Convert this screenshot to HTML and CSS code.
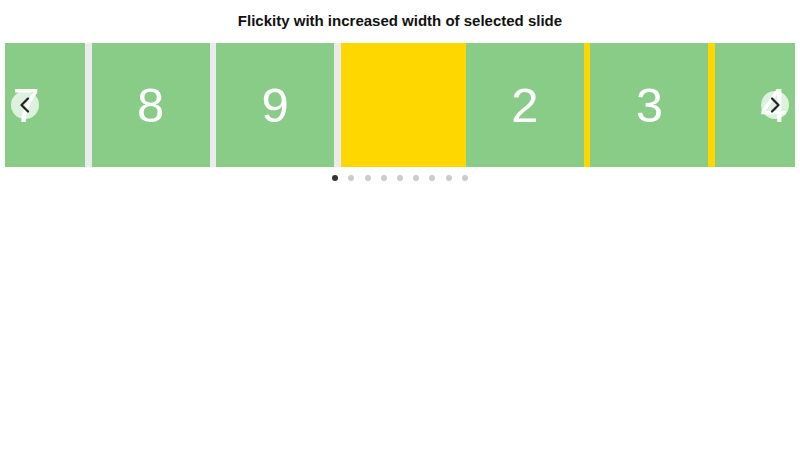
FILE: index.html
```html
<!DOCTYPE html>
<html>
<head>
<meta charset="utf-8">
<link rel="stylesheet" href="styles.css">
</head>
<body>
<h1 class="title">Flickity with increased width of selected slide</h1>
<div class="carousel">
  <div class="viewport">
    <div class="track">
      <div class="cell">7</div>
      <div class="cell">8</div>
      <div class="cell">9</div>
      <div class="selected-group">
        <div class="cell selected"></div>
        <div class="cell">2</div>
        <div class="cell">3</div>
        <div class="cell">4</div>
      </div>
    </div>
  </div>
  <button class="nav prev" aria-label="Previous">
    <svg viewBox="0 0 16 16" width="16" height="16"><polyline points="11,1.5 4.5,8 11,14.5" fill="none" stroke="#222" stroke-width="2.2" stroke-linecap="round" stroke-linejoin="round"/></svg>
  </button>
  <button class="nav next" aria-label="Next">
    <svg viewBox="0 0 16 16" width="16" height="16"><polyline points="5,1.5 11.5,8 5,14.5" fill="none" stroke="#222" stroke-width="2.2" stroke-linecap="round" stroke-linejoin="round"/></svg>
  </button>
  <ol class="dots">
    <li class="dot active"></li>
    <li class="dot"></li>
    <li class="dot"></li>
    <li class="dot"></li>
    <li class="dot"></li>
    <li class="dot"></li>
    <li class="dot"></li>
    <li class="dot"></li>
    <li class="dot"></li>
  </ol>
</div>
</body>
</html>
```

FILE: styles.css
```css
html, body {
  margin: 0;
  padding: 0;
  background: #fff;
}
body {
  font-family: "Liberation Sans", Arial, sans-serif;
  color: #111;
}
.title {
  margin: 0;
  padding-top: 11px;
  height: 20px;
  line-height: 20px;
  font-size: 15px;
  font-weight: bold;
  text-align: center;
}
.carousel {
  position: relative;
  margin: 11.7px 5px 0 5px;
}
.viewport {
  overflow: hidden;
  height: 124px;
  background: #ebebeb;
}
.track {
  display: flex;
  gap: 6.4px;
  height: 100%;
  margin-left: -38px;
}
.cell {
  flex: 0 0 auto;
  width: 118.2px;
  height: 124px;
  background: #8c8;
  color: #fff;
  font-size: 49px;
  line-height: 124px;
  text-align: center;
}
.selected-group {
  flex: 0 0 auto;
  display: flex;
  gap: 6.3px;
  background: #ffd700;
  height: 124px;
}
.cell.selected {
  width: 125px;
  background: #ffd700;
  margin-right: -6.3px;
}
.nav {
  position: absolute;
  top: 48px;
  width: 28px;
  height: 28px;
  border: none;
  border-radius: 50%;
  background: rgba(255, 255, 255, 0.72);
  padding: 0;
  display: flex;
  align-items: center;
  justify-content: center;
  cursor: pointer;
}
.nav.prev { left: 6px; }
.nav.next { right: 6px; }
.dots {
  list-style: none;
  margin: 0;
  padding: 0;
  display: flex;
  justify-content: center;
  gap: 10.2px;
  margin-top: 8px;
  height: 6px;
}
.dot {
  width: 6px;
  height: 6px;
  border-radius: 50%;
  background: #ccc;
}
.dot.active {
  background: #333;
}
```
